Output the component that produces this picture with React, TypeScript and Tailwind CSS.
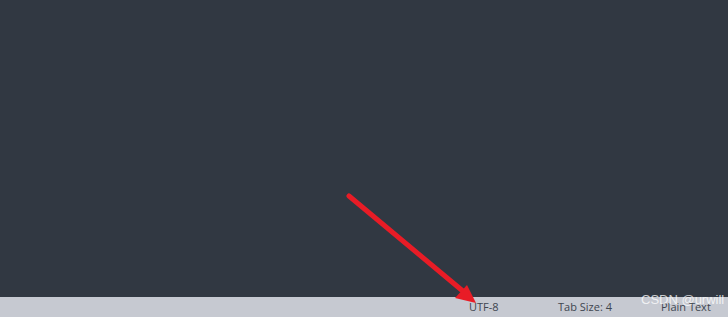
import React from 'react';

const App: React.FC = () => {
  return (
    <div className="relative w-[728px] h-[317px] flex flex-col bg-[#313842] overflow-hidden" style={{ fontFamily: '"Open Sans", sans-serif' }}>
      <div className="flex-1" />
      <div className="h-[20px] bg-[#c6c9d1] flex items-center text-[11px] text-[#404650]">
        <div className="flex-1" />
        <span className="w-[89px]">UTF-8</span>
        <span className="w-[103px]">Tab Size: 4</span>
        <span className="w-[67px]">Plain Text</span>
      </div>
      {/* annotation arrow */}
      <svg className="absolute left-0 top-0 pointer-events-none" width="728" height="317">
        <line x1="349" y1="196" x2="464" y2="292" stroke="#e81c26" strokeWidth="5" strokeLinecap="round" />
        <polygon points="476,303 455,298 467,285" fill="#e81c26" />
      </svg>
      <span
        className="absolute left-[641px] top-[292px] text-[13px] leading-[16px] text-white/75"
        style={{ fontFamily: '"Liberation Sans", sans-serif' }}
      >
        CSDN @urwill
      </span>
    </div>
  );
};

export default App;
